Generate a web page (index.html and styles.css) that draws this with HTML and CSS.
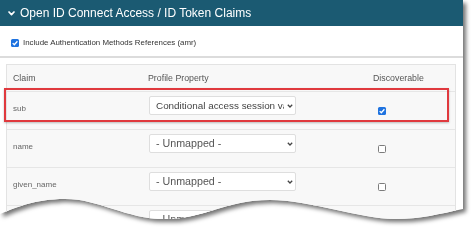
FILE: index.html
```html
<!DOCTYPE html>
<html>
<head>
<meta charset="utf-8">
<link rel="stylesheet" href="styles.css">
</head>
<body>
<div class="frame">
  <div class="paper">
    <div class="panel-head">
      <svg class="chev" viewBox="0 0 7 5" width="7" height="5"><path d="M1 1 L3.5 3.6 L6 1" stroke="#fff" stroke-width="1.7" fill="none" stroke-linecap="round" stroke-linejoin="round"/></svg>
      <span class="title">Open ID Connect Access / ID Token Claims</span>
    </div>
    <div class="option">
      <span class="cb on"><svg viewBox="0 0 8 8" width="8" height="8"><path d="M1.7 4.1 L3.3 5.7 L6.4 2.3" fill="none" stroke="#fff" stroke-width="1.3"/></svg></span>
      <span class="option-label">Include Authentication Methods References (amr)</span>
    </div>
    <div class="claims">
      <div class="table">
        <div class="row head">
          <div class="th">Claim</div>
          <div class="th">Profile Property</div>
          <div class="th th-disc">Discoverable</div>
        </div>
        <div class="row">
          <div class="claim">sub</div>
          <div class="prop">
            <div class="select"><span class="val dark">Conditional access session value</span><svg class="arrow" viewBox="0 0 6 4" width="6" height="4"><path d="M0.8 0.8 L3 3 L5.2 0.8" stroke="#444" stroke-width="1.3" fill="none"/></svg></div>
          </div>
          <div class="disc"><span class="cb on"><svg viewBox="0 0 8 8" width="8" height="8"><path d="M1.7 4.1 L3.3 5.7 L6.4 2.3" fill="none" stroke="#fff" stroke-width="1.3"/></svg></span></div>
          <div class="mark"></div>
        </div>
        <div class="row">
          <div class="claim">name</div>
          <div class="prop">
            <div class="select"><span class="val">- Unmapped -</span><svg class="arrow" viewBox="0 0 6 4" width="6" height="4"><path d="M0.8 0.8 L3 3 L5.2 0.8" stroke="#444" stroke-width="1.3" fill="none"/></svg></div>
          </div>
          <div class="disc"><span class="cb"></span></div>
        </div>
        <div class="row">
          <div class="claim">given_name</div>
          <div class="prop">
            <div class="select"><span class="val">- Unmapped -</span><svg class="arrow" viewBox="0 0 6 4" width="6" height="4"><path d="M0.8 0.8 L3 3 L5.2 0.8" stroke="#444" stroke-width="1.3" fill="none"/></svg></div>
          </div>
          <div class="disc"><span class="cb"></span></div>
        </div>
        <div class="row">
          <div class="claim">family_name</div>
          <div class="prop">
            <div class="select"><span class="val">- Unmapped -</span><svg class="arrow" viewBox="0 0 6 4" width="6" height="4"><path d="M0.8 0.8 L3 3 L5.2 0.8" stroke="#444" stroke-width="1.3" fill="none"/></svg></div>
          </div>
          <div class="disc"><span class="cb"></span></div>
        </div>
      </div>
    </div>
  </div>
</div>
</body>
</html>
```
FILE: styles.css
```css
* { box-sizing: border-box; }
html, body { margin: 0; padding: 0; background: #fff; }
body {
  width: 474px;
  height: 232px;
  overflow: hidden;
  font-family: "Liberation Sans", Arial, sans-serif;
}
.frame {
  width: 463px;
  height: 232px;
  filter: drop-shadow(3px 3px 2px rgba(0, 0, 0, 0.55));
}
.paper {
  width: 463px;
  height: 232px;
  background: #fff;
  clip-path: path('M0 0 H463 V209 C440 214 420 219 395 219 C360 219 310 200 270 200 C225 200 205 219 165 219 C125 219 100 199 65 199 C35 199 15 208 5 212 L0 214 Z');
}
.panel-head {
  height: 26px;
  background: #1b5a72;
  color: #fff;
  display: flex;
  align-items: center;
  gap: 5px;
  padding-left: 8px;
}
.chev { display: block; flex: none; }
.title { font-size: 12px; line-height: 14px; }
.option {
  height: 32px;
  display: flex;
  align-items: center;
  gap: 4px;
  padding: 3px 0 0 11px;
  border-bottom: 2px solid #dcdcdc;
  font-size: 7.9px;
  color: #333;
}
.cb {
  display: block;
  width: 8px;
  height: 8px;
  border-radius: 1.5px;
  border: 1px solid #7c7c7c;
  background: #fff;
  flex: none;
}
.cb.on {
  border: none;
  background: #1f73e0;
}
.cb svg { display: block; }
.claims { padding: 6px 7px 0 6px; }
.table {
  border: 1px solid #e3e3e3;
  border-bottom: none;
  background: #f8f8f8;
}
.row {
  position: relative;
  display: grid;
  grid-template-columns: 135px 224px 1fr;
  height: 38px;
  border-top: 1px solid #e6e6e6;
}
.row.head {
  height: 26px;
  border-top: none;
  align-items: center;
}
.th {
  padding-left: 6px;
  font-size: 8.8px;
  line-height: 11px;
  color: #555;
}
.th-disc { padding-left: 7px; }
.claim {
  padding: 12px 6px 0;
  font-size: 8px;
  line-height: 10px;
  color: #666;
}
.prop { padding: 4px 0 0 7px; }
.select {
  display: flex;
  align-items: center;
  width: 147px;
  height: 19px;
  background: #fff;
  border: 1px solid #dedede;
  border-radius: 2px;
  padding: 0 2px 0 6px;
}
.val {
  flex: 1;
  min-width: 0;
  overflow: hidden;
  white-space: nowrap;
  font-size: 10.7px;
  line-height: 13px;
  color: #555;
}
.val.dark { color: #444; font-size: 9.9px; }
.arrow { display: block; flex: none; margin-left: 3px; }
.disc { padding: 15px 0 0 12px; }
.mark {
  position: absolute;
  left: -3px;
  right: 6px;
  top: -4px;
  height: 34px;
  border: 2px solid #e0393e;
  box-shadow: 0 1px 2px rgba(0, 0, 0, 0.25);
}
```
